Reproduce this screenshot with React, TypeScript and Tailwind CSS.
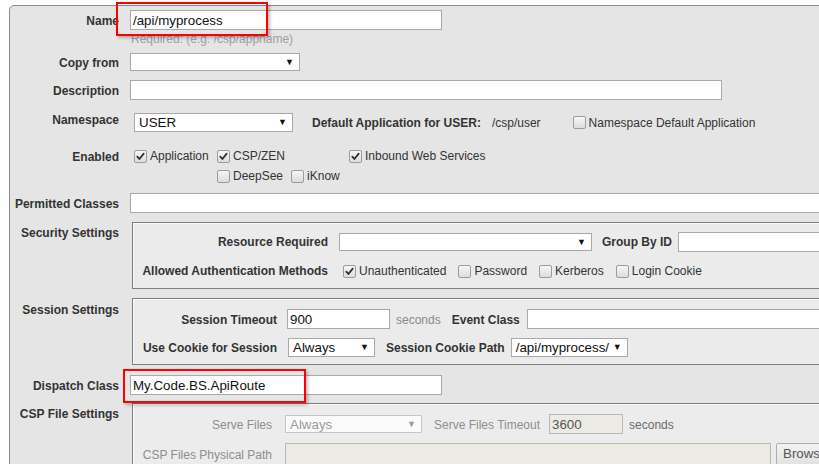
import React from "react";

const Check = ({ checked = false }: { checked?: boolean }) => (
  <span className="ml-[4px] mr-[3px] inline-flex h-[13px] w-[13px] shrink-0 items-center justify-center rounded-[2px] border border-[#9c9c9c] bg-gradient-to-b from-[#f6f6f6] to-[#dcdcdc]">
    {checked && (
      <svg width="9" height="9" viewBox="0 0 9 9">
        <path d="M1.3 4.6 L3.4 7 L7.7 1.6" stroke="#2a2a2a" strokeWidth="1.7" fill="none" strokeLinecap="round" strokeLinejoin="round" />
      </svg>
    )}
  </span>
);

const CheckItem = ({ checked = false, label }: { checked?: boolean; label: string }) => (
  <span className="flex items-center whitespace-nowrap">
    <Check checked={checked} />
    <span>{label}</span>
  </span>
);

const Select = ({ className, text = "", disabled = false }: { className: string; text?: string; disabled?: boolean }) => (
  <div
    className={
      "flex shrink-0 items-center justify-between border pl-[4px] pr-[5px] text-[13.33px] " +
      (disabled ? "border-[#c6c6c6] bg-[#fbfbfb] text-[#9a9a9a] " : "border-[#a9a9a9] bg-white text-[#111] ") +
      className
    }
  >
    <span className="whitespace-nowrap pt-[1px]">{text}</span>
    <span className={"text-[9px] leading-none " + (disabled ? "text-[#9a9a9a]" : "text-[#111]")}>▼</span>
  </div>
);

const Input = ({ className, value = "", disabled = false }: { className: string; value?: string; disabled?: boolean }) => (
  <div
    className={
      "flex shrink-0 items-center border px-[2px] pt-[1px] text-[13.33px] whitespace-nowrap " +
      (disabled ? "border-[#b9b9b9] bg-[#ebebe4] text-[#555] " : "border-[#a9a9a9] bg-white text-[#111] ") +
      className
    }
  >
    {value}
  </div>
);

const Label = ({ children }: { children: React.ReactNode }) => (
  <div className="w-[120px] shrink-0 whitespace-nowrap pr-[11px] pt-[1px] text-right font-bold text-[#333]">{children}</div>
);

export default function App() {
  return (
    <div className="relative h-[464px] w-[819px] overflow-hidden bg-white font-['Liberation_Sans',Arial,sans-serif] text-[12px] text-[#333]">
      <div className="ml-[9px] mt-[5px] flex h-[480px] w-[840px] flex-col rounded-tl-[5px] border border-[#8a8a8a] bg-[#e5e5e5]">
        {/* Name */}
        <div className="mt-[4px] flex h-[20px] items-center">
          <Label>Name</Label>
          <Input className="h-[20px] w-[312px]" value="/api/myprocess" />
        </div>
        <div className="mt-[1px] flex h-[14px] items-center pl-[121px] pt-[1px] text-[#a0a0a0]">Required: (e.g. /csp/appname)</div>

        {/* Copy from */}
        <div className="mt-[8px] flex h-[18px] items-center">
          <Label>Copy from</Label>
          <Select className="h-[18px] w-[170px]" />
        </div>

        {/* Description */}
        <div className="mt-[9px] flex h-[20px] items-center">
          <Label>Description</Label>
          <Input className="h-[20px] w-[592px]" />
        </div>

        {/* Namespace */}
        <div className="mt-[13px] flex h-[19px] items-center">
          <div className="mb-[6px]">
            <Label>Namespace</Label>
          </div>
          <Select className="ml-[4px] h-[19px] w-[159px]" text="USER" />
          <span className="ml-[19px] whitespace-nowrap pt-[1px] font-bold">Default Application for USER:</span>
          <span className="ml-[11px] whitespace-nowrap pt-[1px]">/csp/user</span>
          <span className="ml-[28px]">
            <CheckItem label="Namespace Default Application" />
          </span>
        </div>

        {/* Enabled */}
        <div className="mt-[16px] flex h-[16px] items-center">
          <Label>Enabled</Label>
          <div className="w-[83px] shrink-0">
            <CheckItem checked label="Application" />
          </div>
          <div className="w-[132px] shrink-0">
            <CheckItem checked label="CSP/ZEN" />
          </div>
          <CheckItem checked label="Inbound Web Services" />
        </div>
        <div className="mt-[4px] flex h-[16px] items-center pl-[203px]">
          <div className="flex items-center gap-[4px]">
            <CheckItem label="DeepSee" />
            <CheckItem label="iKnow" />
          </div>
        </div>

        {/* Permitted classes */}
        <div className="mt-[9px] flex h-[20px] items-center">
          <Label>Permitted Classes</Label>
          <Input className="h-[20px] flex-1" />
        </div>

        {/* Security settings */}
        <div className="mt-[9px] flex">
          <div className="pt-[1px]">
            <Label>Security Settings</Label>
          </div>
          <div className="ml-[2px] flex-1 border border-[#7e7e7e] bg-[#ebebeb] pb-[8px] pt-[9px] shadow-[inset_1px_1px_0_#fafafa]">
            <div className="flex h-[20px] items-center">
              <div className="w-[206px] shrink-0 whitespace-nowrap pr-[11px] text-right font-bold">Resource Required</div>
              <Select className="h-[18px] w-[253px]" />
              <span className="ml-[10px] whitespace-nowrap font-bold">Group By ID</span>
              <Input className="ml-[6px] h-[20px] flex-1" />
            </div>
            <div className="mt-[10px] flex h-[18px] items-center">
              <div className="w-[206px] shrink-0 whitespace-nowrap pr-[11px] text-right font-bold">Allowed Authentication Methods</div>
              <div className="flex items-center gap-[8px]">
                <CheckItem checked label="Unauthenticated" />
                <CheckItem label="Password" />
                <CheckItem label="Kerberos" />
                <CheckItem label="Login Cookie" />
              </div>
            </div>
          </div>
        </div>

        {/* Session settings */}
        <div className="mt-[9px] flex">
          <div className="pt-[2px]">
            <Label>Session Settings</Label>
          </div>
          <div className="ml-[2px] flex-1 border border-[#7e7e7e] bg-[#ebebeb] pb-[7px] pt-[10px] shadow-[inset_1px_1px_0_#fafafa]">
            <div className="flex h-[20px] items-center">
              <div className="w-[154px] shrink-0 whitespace-nowrap pr-[10px] pt-[1px] text-right font-bold">Session Timeout</div>
              <Input className="h-[20px] w-[103px]" value="900" />
              <span className="ml-[6px] pt-[1px] text-[#8a8a8a]">seconds</span>
              <span className="ml-[11px] whitespace-nowrap pt-[1px] font-bold">Event Class</span>
              <Input className="ml-[7px] h-[20px] flex-1" />
            </div>
            <div className="mt-[9px] flex h-[19px] items-center">
              <div className="w-[154px] shrink-0 whitespace-nowrap pr-[10px] pt-[1px] text-right font-bold">Use Cookie for Session</div>
              <Select className="ml-[1px] h-[19px] w-[87px]" text="Always" />
              <span className="ml-[11px] whitespace-nowrap pt-[1px] font-bold">Session Cookie Path</span>
              <Select className="ml-[6px] h-[19px] w-[117px]" text="/api/myprocess/" />
            </div>
          </div>
        </div>

        {/* Dispatch class */}
        <div className="mt-[10px] flex h-[20px] items-center">
          <Label>Dispatch Class</Label>
          <Input className="h-[20px] w-[312px]" value="My.Code.BS.ApiRoute" />
        </div>

        {/* CSP file settings */}
        <div className="mt-[8px] flex flex-1">
          <div className="pt-[1px]">
            <Label>CSP File Settings</Label>
          </div>
          <div className="ml-[2px] flex-1 border border-[#7e7e7e] bg-[#ececec] pt-[10px] text-[#8e8e8e] shadow-[inset_1px_1px_0_#fafafa]">
            <div className="flex h-[20px] items-center">
              <div className="w-[152px] shrink-0 whitespace-nowrap pr-[13px] pt-[1px] text-right">Serve Files</div>
              <Select disabled className="h-[18px] w-[137px]" text="Always" />
              <span className="ml-[12px] whitespace-nowrap pt-[1px]">Serve Files Timeout</span>
              <Input disabled className="ml-[9px] h-[20px] w-[74px]" value="3600" />
              <span className="ml-[6px] pt-[1px] text-[#6a6a6a]">seconds</span>
            </div>
            <div className="mt-[9px] flex h-[22px] items-center">
              <div className="w-[152px] shrink-0 whitespace-nowrap pr-[13px] pt-[1px] text-right">CSP Files Physical Path</div>
              <Input disabled className="h-[22px] w-[486px]" />
              <div className="ml-[5px] flex h-[22px] items-center rounded-[2px] border border-[#adadad] bg-gradient-to-b from-[#f3f3f3] to-[#e2e2e2] px-[6px] text-[13.33px] text-[#555]">
                Browse...
              </div>
            </div>
          </div>
        </div>
      </div>

      {/* Red annotation boxes */}
      <div className="absolute left-[116px] top-[2px] h-[34px] w-[152px] border-2 border-[#f00] shadow-[2px_2px_3px_rgba(0,0,0,0.25)]" />
      <div className="absolute left-[123px] top-[369px] h-[34px] w-[183px] border-2 border-[#f00] shadow-[2px_2px_3px_rgba(0,0,0,0.25)]" />
    </div>
  );
}
